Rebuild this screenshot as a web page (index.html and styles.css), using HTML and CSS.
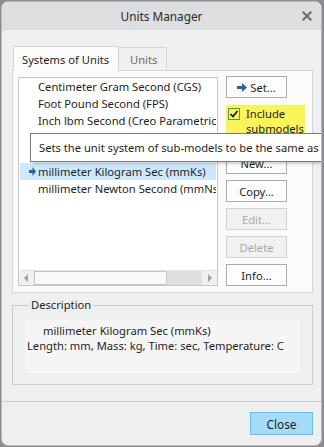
FILE: index.html
```html
<!DOCTYPE html>
<html>
<head>
<meta charset="utf-8">
<link rel="stylesheet" href="styles.css">
</head>
<body>
<div class="window">
  <div class="titlebar">
    <span></span>
    <span class="title">Units Manager</span>
    <span class="xbtn"><svg width="10" height="10" viewBox="0 0 10 10"><path d="M1.5 1.5L8.5 8.5M8.5 1.5L1.5 8.5" stroke="#6f6f6f" stroke-width="2.2" stroke-linecap="square"/></svg></span>
  </div>
  <div class="content">
    <div class="tabs">
      <div class="tab active">Systems of Units</div>
      <div class="tab">Units</div>
    </div>
    <div class="panel">
      <div class="list">
        <div class="items">
          <div class="item"><span class="ico"></span>Centimeter Gram Second (CGS)</div>
          <div class="item"><span class="ico"></span>Foot Pound Second (FPS)</div>
          <div class="item"><span class="ico"></span>Inch lbm Second (Creo Parametric Default)</div>
          <div class="item"><span class="ico"></span>Inch Pound Second (IPS)</div>
          <div class="item"><span class="ico"></span>meter Kilogram Second (MKS)</div>
          <div class="item sel"><span class="ico"><svg width="7" height="9" viewBox="0 0 7 9"><path d="M0 3h3.5V0L7 4.5 3.5 9V6H0z" fill="#2b5f9e"/></svg></span>millimeter Kilogram Sec (mmKs)</div>
          <div class="item"><span class="ico"></span>millimeter Newton Second (mmNs)</div>
        </div>
        <div class="hscroll">
          <div class="sbtn"><svg width="5" height="8" viewBox="0 0 5 8"><path d="M4 0v8L0 4z" fill="#a0a0a0"/></svg></div>
          <div class="thumb"></div>
          <div class="track"></div>
          <div class="sbtn"><svg width="5" height="8" viewBox="0 0 5 8"><path d="M1 0v8l4-4z" fill="#a0a0a0"/></svg></div>
        </div>
      </div>
      <div class="buttons">
        <button class="btn set"><svg width="10" height="9" viewBox="0 0 10 9"><path d="M0 3h5V0l5 4.5L5 9V6H0z" fill="#2b5f9e"/></svg>Set...</button>
        <div class="include">
          <span class="cb"><svg width="12" height="12" viewBox="0 0 12 12"><rect x="0.5" y="0.5" width="11" height="11" fill="none" stroke="#4f9a5f"/><path d="M2.5 6l2.5 2.5 4.5-5.5" fill="none" stroke="#111" stroke-width="1.6"/></svg></span>
          <span class="inctext">Include<br>submodels</span>
        </div>
        <button class="btn new">New...</button>
        <button class="btn">Copy...</button>
        <button class="btn dis">Edit...</button>
        <button class="btn dis">Delete</button>
        <button class="btn">Info...</button>
      </div>
    </div>
    <fieldset class="desc">
      <legend>Description</legend>
      <div class="descbox">
        <div class="dl1">millimeter Kilogram Sec (mmKs)</div>
        <div class="dl2">Length: mm, Mass: kg, Time: sec, Temperature: C</div>
      </div>
    </fieldset>
  </div>
  <div class="footer">
    <button class="closebtn">Close</button>
  </div>
  <div class="tooltip">Sets the unit system of sub-models to be the same as the top-level model</div>
</div>
</body>
</html>
```
FILE: styles.css
```css
* { box-sizing: border-box; }
html, body { margin: 0; padding: 0; }
body {
  width: 324px; height: 447px; overflow: hidden;
  background: #8a8c90;
  padding-top: 1px;
  font-family: "Noto Sans", "DejaVu Sans", sans-serif;
  font-size: 11.2px;
  color: #1e1e1e;
}
.window {
  margin-left: 1px;
  width: 321px; height: 445px;
  background: #eeeff1;
  border: 1px solid #b9b9b9;
  border-radius: 7px;
  position: relative;
  overflow: hidden;
  display: flex; flex-direction: column;
}
.titlebar {
  height: 28px;
  background: #dcdee0;
  display: grid;
  grid-template-columns: 1fr auto 1fr;
  align-items: center;
}
.title { font-size: 11.8px; color: #2a2a2a; }
.xbtn { justify-self: end; margin-right: 9px; display: flex; }
.content { padding: 16px 8px 0 10px; }
.tabs { display: flex; align-items: flex-end; height: 24px; margin-left: 1px; }
.tab {
  height: 23px; padding: 0 9px 0 11px;
  display: flex; align-items: center;
  border: 1px solid #d6d6d6; border-bottom: none;
  background: #f0f0f0; color: #6b6b6b;
  margin-left: -1px; white-space: nowrap;
}
.tab.active {
  height: 25px; margin-bottom: -1px; margin-left: 0;
  background: #fbfbfb; color: #1e1e1e;
  position: relative; z-index: 1;
  width: 106px; padding: 0 0 0 8px;
}
.panel {
  height: 223px;
  border: 1px solid #d6d6d6;
  background: #fbfbfb;
  padding: 6px 0 6px 5px;
  display: grid;
  grid-template-columns: 200px 61px;
  column-gap: 8px;
}
.list {
  border: 1px solid #c6c6c6;
  background: #fff;
  display: flex; flex-direction: column;
  overflow: hidden;
}
.items { flex: 1; padding: 0 1px; }
.item {
  height: 17px; display: flex; align-items: center;
  padding-left: 7px; white-space: nowrap; overflow: hidden;
}
.ico { width: 11px; flex: none; display: flex; align-items: center; padding-left: 2px; }
.item.sel { background: #cce8ff; }
.hscroll { height: 15px; display: flex; background: #f0f0f0; border-top: 1px solid #e4e4e4; }
.sbtn { width: 15px; display: flex; align-items: center; justify-content: center; background: #f0f0f0; }
.thumb { width: 133px; background: #f8f8f8; border: 1px solid #c4c4c4; }
.track { flex: 1; background: #dedfe0; }
.buttons { display: flex; flex-direction: column; margin-top: -1px; }
.btn {
  height: 22px; width: 61px;
  border: 1px solid #adadad; background: #fdfdfd;
  font-family: inherit; font-size: 11.2px; color: #1e1e1e;
  padding: 0; margin: 6px 0 0 0;
  display: flex; align-items: center; justify-content: center; gap: 3px;
}
.btn.set { margin-top: 0; }
.btn.new { margin-top: 19px; }
.btn.dis { border-color: #d2d2d2; background: #f1f1f1; color: #a9a9a9; }
.include {
  margin-top: 7px; width: 79px; height: 28px;
  background: #fbf35a;
  display: flex; align-items: flex-start;
  padding: 2px 0 0 2px;
}
.cb { display: flex; margin-top: 1px; }
.inctext { margin-left: 6px; line-height: 15px; margin-top: -1px; }
.desc {
  margin: 4px 0 0 0;
  border: 1px solid #cbcbcb;
  padding: 0 12px 11px 12px;
}
.desc legend { margin-left: 4px; padding: 0 2px; line-height: 16px; }
.descbox {
  margin-top: 7px; height: 53px;
  background: #f5f5f6;
  padding-top: 3px; line-height: 15px;
}
.dl1 { padding-left: 18px; }
.dl2 { padding-left: 2px; white-space: nowrap; }
.footer {
  margin-top: 16px;
  border-top: 1px solid #cacaca;
  padding: 10px 8px 0 0;
  display: flex; justify-content: flex-end;
}
.closebtn {
  width: 63px; height: 23px;
  background: #a7dcf8; border: 1px solid #5ec0ef;
  font-family: inherit; font-size: 11.8px; color: #1e1e1e;
  padding: 0;
}
.tooltip {
  position: absolute; left: 28px; top: 131px;
  width: 320px; height: 29px;
  background: #fff; border: 1px solid #7a7a7a;
  box-shadow: 2px 2px 3px rgba(0,0,0,0.18);
  padding-left: 8px;
  display: flex; align-items: center;
  white-space: nowrap;
}
```
